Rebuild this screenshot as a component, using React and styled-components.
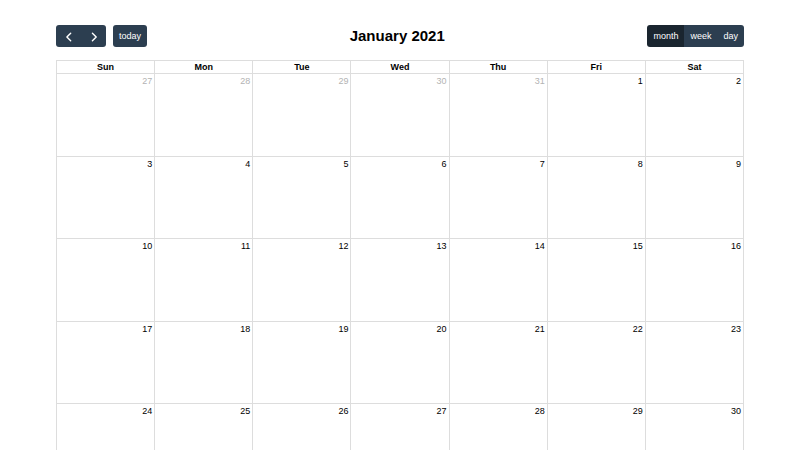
import React, { useState } from "react";
import styled, { createGlobalStyle } from "styled-components";

const WEEKDAYS = ["Sun", "Mon", "Tue", "Wed", "Thu", "Fri", "Sat"];
const VIEWS = ["month", "week", "day"];
const MONTHS = [
  "January",
  "February",
  "March",
  "April",
  "May",
  "June",
  "July",
  "August",
  "September",
  "October",
  "November",
  "December",
];

// Six weeks of dates, starting on the Sunday on or before the 1st
const getWeeks = (year, month) => {
  const offset = new Date(year, month, 1).getDay();

  return Array.from({ length: 6 }, (_, week) =>
    WEEKDAYS.map((_, day) => new Date(year, month, week * 7 + day + 1 - offset))
  );
};

const Chevron = ({ points }) => (
  <svg width="13" height="13" viewBox="0 0 24 24" aria-hidden="true">
    <polyline
      points={points}
      fill="none"
      stroke="currentColor"
      strokeWidth="2.6"
      strokeLinecap="round"
      strokeLinejoin="round"
    />
  </svg>
);

export default function App() {
  const [current, setCurrent] = useState(new Date(2021, 0, 1));
  const [view, setView] = useState("month");

  const year = current.getFullYear();
  const month = current.getMonth();

  const moveMonth = (step) => {
    setCurrent(new Date(year, month + step, 1));
  };

  return (
    <Calendar>
      <GlobalStyle />
      <Toolbar>
        <ToolbarSide>
          <ButtonGroup>
            <IconButton aria-label="prev" onClick={() => moveMonth(-1)}>
              <Chevron points="16,6 9,13 16,20" />
            </IconButton>
            <IconButton aria-label="next" onClick={() => moveMonth(1)}>
              <Chevron points="10,6 17,13 10,20" />
            </IconButton>
          </ButtonGroup>
          <ButtonGroup>
            <Button onClick={() => setCurrent(new Date())}>today</Button>
          </ButtonGroup>
        </ToolbarSide>

        <Title>
          {MONTHS[month]} {year}
        </Title>

        <ToolbarSide>
          <ButtonGroup>
            {VIEWS.map((name) => (
              <Button
                key={name}
                $active={view === name}
                aria-pressed={view === name}
                onClick={() => setView(name)}
              >
                {name}
              </Button>
            ))}
          </ButtonGroup>
        </ToolbarSide>
      </Toolbar>

      <Table>
        <thead>
          <tr>
            {WEEKDAYS.map((day) => (
              <Th key={day} scope="col">
                {day}
              </Th>
            ))}
          </tr>
        </thead>
        <tbody>
          {getWeeks(year, month).map((week) => (
            <tr key={week[0].getTime()}>
              {week.map((date) => (
                <DayCell
                  key={date.getTime()}
                  $outside={date.getMonth() !== month}
                >
                  {date.getDate()}
                </DayCell>
              ))}
            </tr>
          ))}
        </tbody>
      </Table>
    </Calendar>
  );
}

const GlobalStyle = createGlobalStyle`
  * {
    box-sizing: border-box;
  }

  body {
    margin: 0;
    background: #fff;
    color: #000;
    font-family: "Liberation Sans", Arial, sans-serif;
    font-size: 9px;
  }

  html {
    scrollbar-width: none;
  }
`;

const Calendar = styled.main`
  width: 86%;
  max-width: 1100px;
  margin: 0 auto;
  padding: 25px 0;
`;

const Toolbar = styled.header`
  display: flex;
  align-items: center;
  justify-content: space-between;
  margin-bottom: 13px;
`;

const ToolbarSide = styled.div`
  display: flex;
  gap: 7px;
`;

const ButtonGroup = styled.div`
  display: flex;
  border-radius: 3px;
  overflow: hidden;
`;

const Button = styled.button`
  height: 22px;
  padding: 0 6px;
  border: none;
  background: ${({ $active }) => ($active ? "#1a252f" : "#2c3e50")};
  color: #fff;
  font-family: inherit;
  font-size: 9px;
  line-height: 14px;
  cursor: pointer;

  &:hover {
    background: #1e2b37;
  }
`;

const IconButton = styled(Button)`
  display: flex;
  align-items: center;
`;

const Title = styled.h2`
  margin: 0;
  font-size: 15px;
  line-height: 18px;
`;

const Table = styled.table`
  width: 100%;
  height: 509px;
  table-layout: fixed;
  border-collapse: collapse;
`;

const Th = styled.th`
  height: 13px;
  padding: 1px;
  border: 1px solid #ddd;
  font-size: 9px;
  line-height: 10px;
`;

const DayCell = styled.td`
  padding: 2px;
  border: 1px solid #ddd;
  color: ${({ $outside }) => ($outside ? "#b3b3b3" : "#000")};
  line-height: 10px;
  text-align: right;
  vertical-align: top;
`;
